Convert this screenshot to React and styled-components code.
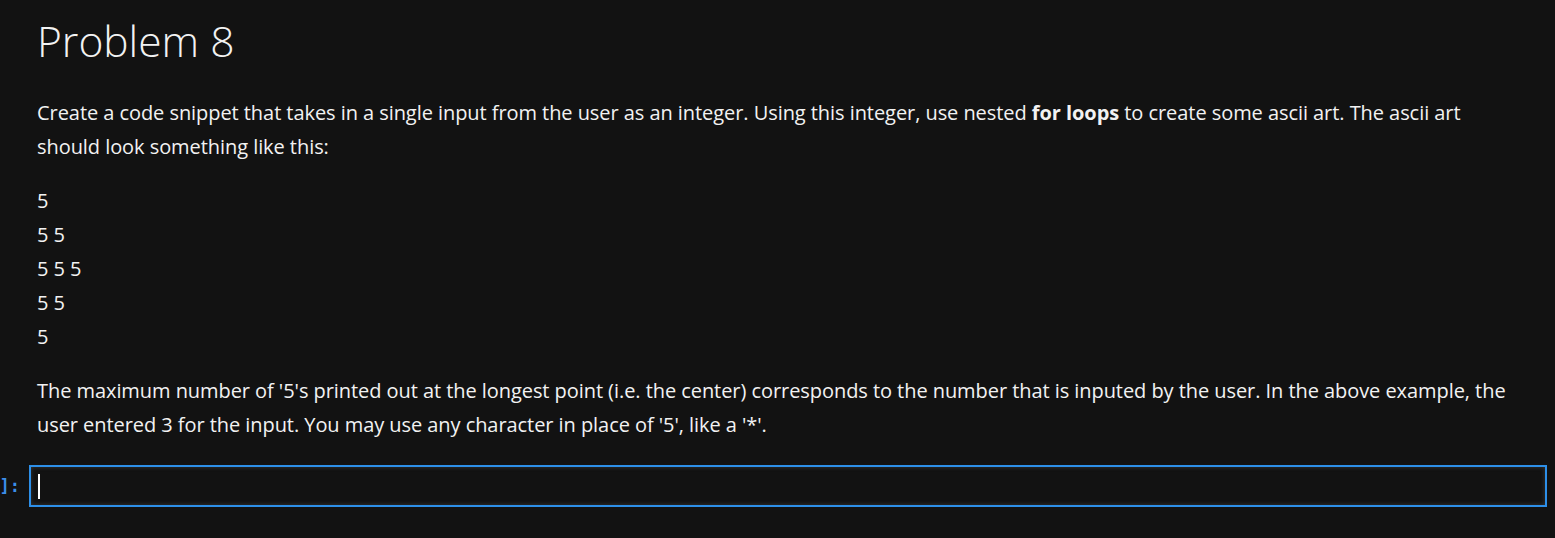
import styled, {createGlobalStyle} from 'styled-components';

const GlobalStyle = createGlobalStyle`
  html, body {
    margin: 0;
    padding: 0;
    background: #121212;
  }
  body {
    font-family: 'Open Sans', 'Noto Sans', sans-serif;
    color: #f2f2f2;
  }
`;

const Notebook = styled.main`
  width: 1555px;
  height: 538px;
  overflow: hidden;
  background: #121212;
`;

const MarkdownCell = styled.section`
  padding: 14px 30px 0 37px;
  width: 1484px;
`;

const Heading = styled.h1`
  margin: 0 0 28px 0;
  font-size: 42.5px;
  line-height: 54px;
  font-weight: 300;
`;

const P = styled.p`
  margin: ${props => (props.$margin ? props.$margin : '0 0 20px 0')};
  font-size: 20px;
  line-height: 34px;
  letter-spacing: -0.06px;
`;

const OneLine = styled.span`
  display: block;
`;

const CodeCell = styled.div`
  display: flex;
  align-items: center;
  margin: 23px 0 0 0;
`;

const Prompt = styled.div`
  width: 29px;
  flex: none;
  display: flex;
  justify-content: flex-end;
  overflow: hidden;
  padding-right: 9px;
  box-sizing: border-box;
  font-family: 'DejaVu Sans Mono', monospace;
  font-size: 17px;
  font-weight: bold;
  color: #3b8eea;
  white-space: pre;
`;

const Editor = styled.div`
  width: 1518px;
  height: 42px;
  box-sizing: border-box;
  border: 2px solid #2d8fe8;
  box-shadow: inset 0 0 4px rgba(80, 80, 80, 0.6);
  display: flex;
  align-items: center;
  padding-left: 7px;
`;

const Caret = styled.span`
  width: 2px;
  height: 25px;
  background: #ffffff;
`;

const ART = ['5', '5 5', '5 5 5', '5 5', '5'];

export default function App() {
  return (
    <Notebook>
      <GlobalStyle />
      <MarkdownCell>
        <Heading>Problem 8</Heading>
        <P>
          Create a code snippet that takes in a single input from the user as an integer. Using this
          integer, use nested <b>for loops</b> to create some ascii art. The ascii art should look
          something like this:
        </P>
        <P>
          {ART.map((line, i) => (
            <OneLine key={i}>{line}</OneLine>
          ))}
        </P>
        <P $margin='0'>
          The maximum number of '5's printed out at the longest point (i.e. the center) corresponds to
          the number that is inputed by the user. In the above example, the user entered 3 for the
          input. You may use any character in place of '5', like a '*'.
        </P>
      </MarkdownCell>
      <CodeCell>
        <Prompt>[ ]:</Prompt>
        <Editor>
          <Caret />
        </Editor>
      </CodeCell>
    </Notebook>
  );
}
